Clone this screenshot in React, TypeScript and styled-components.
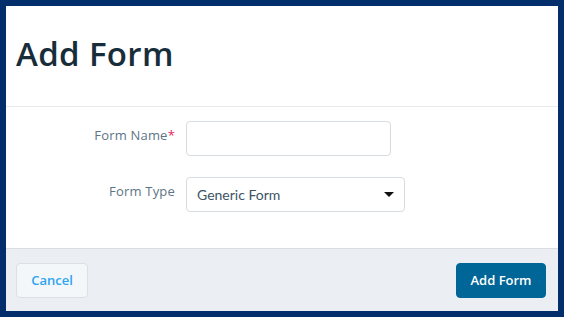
import React from "react";
import styled, { createGlobalStyle } from "styled-components";

const Global = createGlobalStyle`
  html, body { margin: 0; padding: 0; height: 317px; overflow: hidden; }
  body { background: #022f6b; font-family: "Open Sans", "Lato", sans-serif; }
  * { box-sizing: border-box; }
`;

const Frame = styled.div`
  height: 317px;
  padding: 6px;
  background: #022f6b;
`;

const Modal = styled.div`
  height: 100%;
  background: #ffffff;
  display: flex;
  flex-direction: column;
`;

const Header = styled.header`
  height: 101px;
  border-bottom: 1px solid #e8eaed;
  display: flex;
  align-items: center;
  padding: 0 10px 6px;
`;

const Title = styled.h1`
  margin: 0;
  font-family: "Open Sans", sans-serif;
  font-weight: 600;
  font-size: 33px;
  color: #172d3a;
  letter-spacing: 0.35px;
`;

const Body = styled.div`
  flex: 1;
  display: grid;
  grid-template-columns: 169px auto;
  column-gap: 11px;
  row-gap: 21px;
  align-content: start;
  padding-top: 14px;
`;

const Label = styled.label`
  justify-self: end;
  padding-top: 5px;
  font-family: "Open Sans", sans-serif;
  font-size: 13px;
  letter-spacing: 0.2px;
  color: #5d7584;
`;

const Req = styled.span`
  color: #e2275d;
`;

const Field = styled.div<{ $w: number }>`
  width: ${(p) => p.$w}px;
  height: 35px;
  border: 1px solid #d7dce0;
  border-radius: 4px;
  background: #fff;
  display: flex;
  align-items: center;
  justify-content: space-between;
  padding: 0 10px;
  font-family: "Lato", sans-serif;
  font-size: 14px;
  color: #3c5464;
`;

const Caret = styled.span`
  width: 0;
  height: 0;
  border-left: 5px solid transparent;
  border-right: 5px solid transparent;
  border-top: 5px solid #111;
`;

const Footer = styled.footer`
  height: 63px;
  border-top: 1px solid #d9dde2;
  background: #ebeef2;
  display: flex;
  align-items: center;
  justify-content: space-between;
  padding: 0 12px 0 10px;
`;

const Button = styled.button<{ $primary?: boolean }>`
  height: 35px;
  width: ${(p) => (p.$primary ? 90 : 72)}px;
  padding: 0;
  border-radius: 4px;
  font-family: "Open Sans", sans-serif;
  font-weight: 600;
  font-size: 13px;
  border: 1px solid ${(p) => (p.$primary ? "#006597" : "#dbe0e5")};
  background: ${(p) => (p.$primary ? "#006597" : "#f4f7fa")};
  color: ${(p) => (p.$primary ? "#ffffff" : "#2ca4ef")};
`;

export default function App() {
  return (
    <>
      <Global />
      <Frame>
        <Modal>
          <Header>
            <Title>Add Form</Title>
          </Header>
          <Body>
            <Label>
              Form Name<Req>*</Req>
            </Label>
            <Field $w={205} />
            <Label>Form Type</Label>
            <Field $w={219}>
              <span>Generic Form</span>
              <Caret />
            </Field>
          </Body>
          <Footer>
            <Button>Cancel</Button>
            <Button $primary>Add Form</Button>
          </Footer>
        </Modal>
      </Frame>
    </>
  );
}
